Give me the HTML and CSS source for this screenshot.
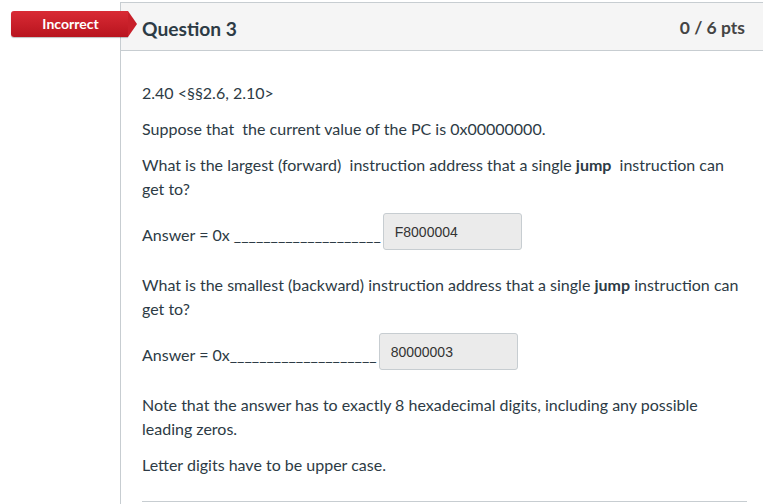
FILE: index.html
```html
<!DOCTYPE html>
<html>
<head>
<meta charset="utf-8">
<link rel="stylesheet" href="styles.css">
</head>
<body>
<div class="page">
  <div class="card">
    <div class="badge">Incorrect</div>
    <div class="header">
      <span class="title">Question 3</span>
      <span class="pts">0 / 6 pts</span>
    </div>
    <div class="body">
      <p>2.40 &lt;§§2.6, 2.10&gt;</p>
      <p>Suppose that&nbsp; the current value of the PC is 0x00000000.</p>
      <p>What is the largest (forward)&nbsp; instruction address that a single <b>jump</b>&nbsp; instruction can get to?</p>
      <p class="ans"><span class="lbl">Answer = 0x ____________________</span><span class="box">F8000004</span></p>
      <p>What is the smallest (backward) instruction address that a single <b>jump</b> instruction can get to?</p>
      <p class="ans"><span class="lbl">Answer = 0x____________________</span><span class="box">80000003</span></p>
      <p>Note that the answer has to exactly 8 hexadecimal digits, including any possible leading zeros.</p>
      <p>Letter digits have to be upper case.</p>
      <hr class="rule">
    </div>
  </div>
</div>
</body>
</html>
```

FILE: styles.css
```css
html, body { margin: 0; padding: 0; background: #fff; overflow: hidden; }
body { font-family: Lato, "Noto Sans", sans-serif; color: #2d3b45; }
.page { width: 763px; height: 504px; overflow: hidden; padding-top: 2px; box-sizing: border-box; }
.card { position: relative; margin-left: 120px; width: 700px; height: 600px; border-left: 1px solid #c7cdd1; border-top: 1px solid #c7cdd1; }
.header { display: flex; justify-content: space-between; align-items: center; height: 47px; background: #f5f5f5; border-bottom: 1px solid #c7cdd1; padding: 0 0 0 21px; }
.title { font-size: 19.2px; font-weight: 700; color: #2d3b45; padding-top: 4px; }
.pts { font-size: 17.5px; font-weight: 700; color: #444; margin-right: 76px; padding-top: 1px; }
.badge { position: absolute; left: -110px; top: 8px; width: 117px; height: 26px; line-height: 26px; text-align: center; color: #fff; font-size: 14px; font-weight: 700; padding-left: 2px; box-sizing: border-box;
  background: linear-gradient(#d92b35, #b8141e); border-radius: 3px 0 0 3px; box-shadow: 0 1px 1px rgba(0,0,0,0.25); }
.badge::after { content: ""; position: absolute; right: -9px; top: 0; border-top: 13px solid transparent; border-bottom: 13px solid transparent; border-left: 9px solid #c8202a; }
.body { padding: 30px 0 0 21px; width: 605px; font-size: 16px; line-height: 24px; }
.body p { margin: 0 0 12px 0; }
.body p.ans { display: flex; align-items: flex-end; margin-bottom: 26px; }
.lbl { white-space: pre; }
.box { display: block; box-sizing: border-box; width: 139px; height: 37px; margin: 0 0 -3px 2px; background: #ebebeb; border: 1px solid #c7cdd1; border-radius: 3px; font-family: "Liberation Sans", Arial, sans-serif; font-size: 14px; color: #333; padding: 8px 0 0 11px; line-height: 20px; }
.rule { border: 0; border-top: 1px solid #c7cdd1; margin: 24px 0 0 0; }
b { font-weight: 700; }
```
